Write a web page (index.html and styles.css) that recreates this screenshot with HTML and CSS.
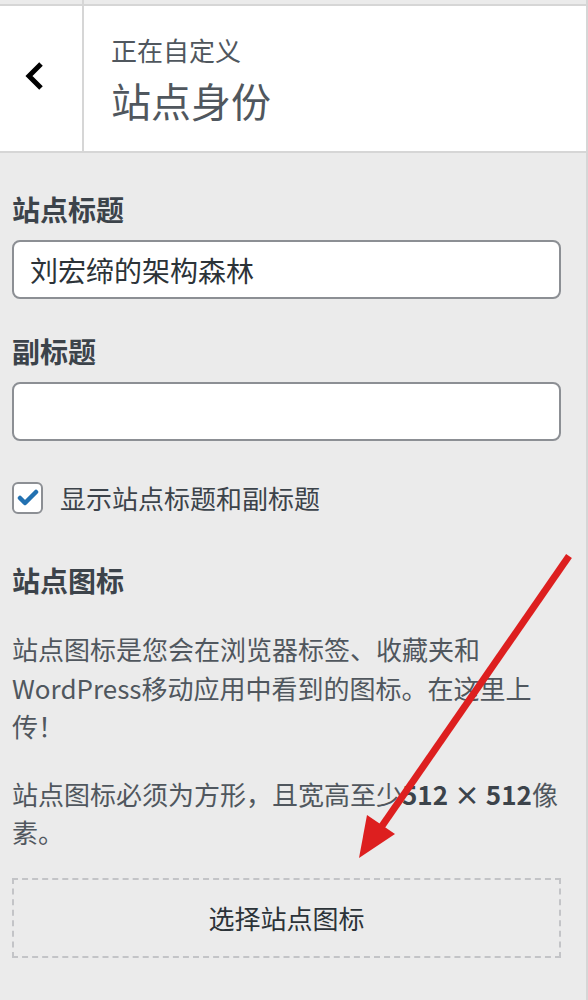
FILE: index.html
```html
<!DOCTYPE html>
<html lang="zh-CN">
<head>
  <meta charset="UTF-8" />
  <meta name="viewport" content="width=device-width, initial-scale=1.0"/>
  <title>自定义 | 站点身份</title>
  <link rel="stylesheet" href="styles.css">
</head>
<body>
  <div class="panel">
    <div class="top-strip"><span class="strip-divider"></span></div>

    <div class="section-header">
      <button class="back" type="button" aria-label="返回">
        <svg width="20" height="32" viewBox="0 0 20 32">
          <polyline points="17,3 5,15 17,27" fill="none" stroke="#000" stroke-width="5" stroke-linejoin="miter"/>
        </svg>
      </button>
      <div class="titles">
        <span class="action">正在自定义</span>
        <h3>站点身份</h3>
      </div>
    </div>

    <div class="controls">
      <label class="control-title" for="blogname">站点标题</label>
      <input type="text" id="blogname" value="刘宏缔的架构森林" />

      <label class="control-title" for="blogdescription">副标题</label>
      <input type="text" id="blogdescription" value="" />

      <div class="check-row">
        <span class="checkbox">
          <svg width="22" height="18" viewBox="0 0 22 18">
            <polyline points="3,9 8,14 19,3" fill="none" stroke="#2271b1" stroke-width="4.5" stroke-linecap="round" stroke-linejoin="round"/>
          </svg>
        </span>
        <span class="check-label">显示站点标题和副标题</span>
      </div>

      <span class="control-title icon-title">站点图标</span>
      <p class="description">站点图标是您会在浏览器标签、收藏夹和WordPress移动应用中看到的图标。在这里上传！</p>
      <p class="description">站点图标必须为方形，且宽高至少<b class="size">512 × 512</b>像素。</p>

      <button class="upload" type="button">选择站点图标</button>
    </div>
  </div>

  <svg class="annotation" width="588" height="1000" viewBox="0 0 588 1000">
    <line x1="569" y1="556" x2="382" y2="826" stroke="#dd1f1f" stroke-width="7"/>
    <polygon points="367,815 395,834 359,858" fill="#dd1f1f"/>
  </svg>
</body>
</html>
```

FILE: styles.css
```css
:root {
  --bg: #ebebeb;
  --line: #d6d6d6;
  --text: #3c434a;
  --muted: #50575e;
}

* {
  margin: 0;
  padding: 0;
  box-sizing: border-box;
}

body {
  font-family: "Noto Sans CJK SC", "Noto Sans", sans-serif;
  background: var(--bg);
  color: var(--text);
  width: 588px;
  height: 1000px;
  position: relative;
  overflow: hidden;
}

.panel {
  width: 588px;
  min-height: 1000px;
  border-right: 2px solid var(--line);
}

.top-strip {
  height: 4px;
  border-bottom: 2px solid var(--line);
  box-sizing: content-box;
}

.strip-divider {
  display: block;
  width: 84px;
  height: 4px;
  border-right: 2px solid var(--line);
}

.section-header {
  display: flex;
  background: #fff;
  border-bottom: 2px solid var(--line);
}

.back {
  width: 84px;
  border: none;
  border-right: 2px solid var(--line);
  background: #fff;
  display: flex;
  align-items: center;
  justify-content: flex-start;
  padding: 0 0 4px 24px;
}

.titles {
  padding: 26px 0 26px 27px;
  display: flex;
  flex-direction: column;
}

.titles .action {
  font-size: 26px;
  line-height: 36px;
  color: var(--muted);
}

.titles h3 {
  margin-top: 7px;
  font-size: 40px;
  line-height: 50px;
  font-weight: 400;
  color: var(--muted);
}

.controls {
  padding: 36px 25px 0 12px;
  display: flex;
  flex-direction: column;
}

.control-title {
  font-size: 28px;
  line-height: 40px;
  font-weight: 700;
  color: var(--text);
  margin-bottom: 11px;
}

.controls input {
  height: 59px;
  border: 2px solid #8c8f94;
  border-radius: 8px;
  padding: 0 16px;
  font-family: inherit;
  font-size: 28px;
  color: #2c3338;
  background: #fff;
  margin-bottom: 32px;
}

.check-row {
  display: flex;
  align-items: center;
  gap: 17px;
  margin-top: 7px;
  margin-bottom: 44px;
}

.checkbox {
  width: 31px;
  height: 32px;
  border: 2px solid #8c8f94;
  border-radius: 6px;
  background: #fff;
  display: flex;
  align-items: center;
  justify-content: center;
}

.check-label {
  font-size: 26px;
  line-height: 36px;
  color: var(--text);
}

.icon-title {
  margin-bottom: 30px;
}

.description {
  font-size: 26px;
  line-height: 38.5px;
  color: var(--muted);
  margin-bottom: 29px;
}

.description .size {
  color: var(--text);
}

.upload {
  margin-top: -3px;
  height: 80px;
  border: 2px dashed #c3c4c7;
  background: transparent;
  font-family: inherit;
  font-size: 26px;
  color: #2c3338;
}

.annotation {
  position: absolute;
  top: 0;
  left: 0;
  pointer-events: none;
}
```
